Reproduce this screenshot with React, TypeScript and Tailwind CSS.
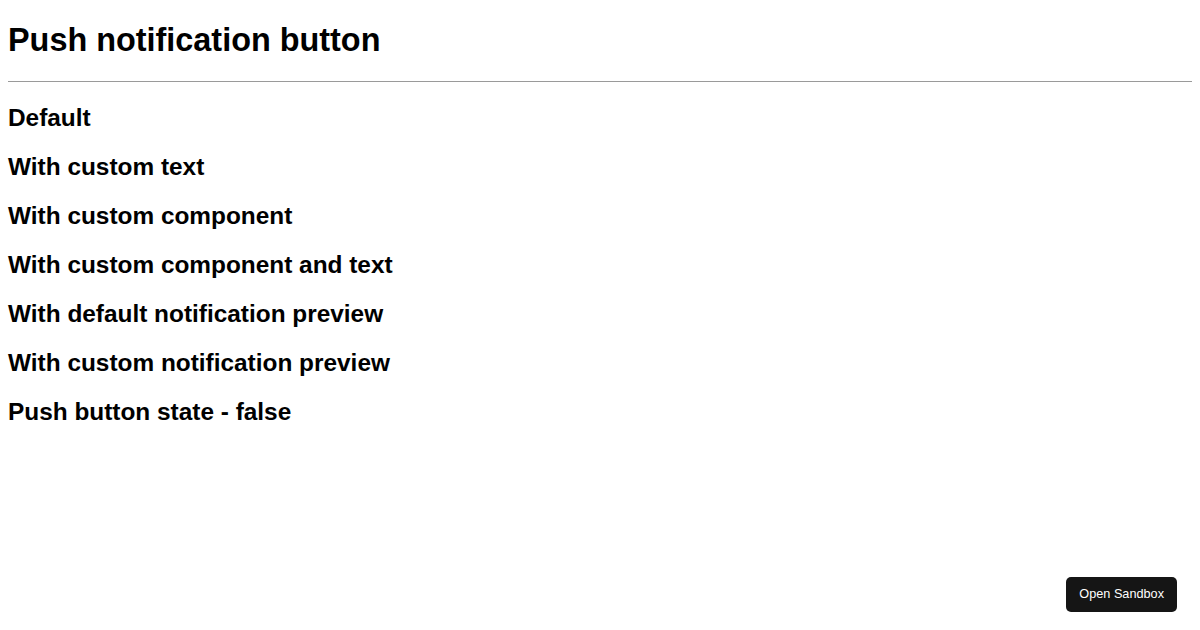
export default function App() {
  const sections = [
    'Default',
    'With custom text',
    'With custom component',
    'With custom component and text',
    'With default notification preview',
    'With custom notification preview',
    'Push button state - false',
  ];

  return (
    <div className="min-h-[630px] bg-white px-2 text-black font-['Liberation_Sans',Arial,sans-serif]">
      <h1 className="pt-[22px] pb-[22px] text-[32.4px] font-bold leading-[37px]">Push notification button</h1>
      <hr className="border-0 border-t border-[#9a9a9a]" />
      <div className="flex flex-col pt-[11px]">
        {sections.map((title) => (
          <h2 key={title} className="text-[24.4px] font-bold leading-[49px]">
            {title}
          </h2>
        ))}
      </div>

      <button className="fixed right-[23px] bottom-[18px] h-[35px] rounded-[5px] bg-[#151515] px-[13px] text-[12.7px] text-white font-['Liberation_Sans',Arial,sans-serif]">
        Open Sandbox
      </button>
    </div>
  );
}
